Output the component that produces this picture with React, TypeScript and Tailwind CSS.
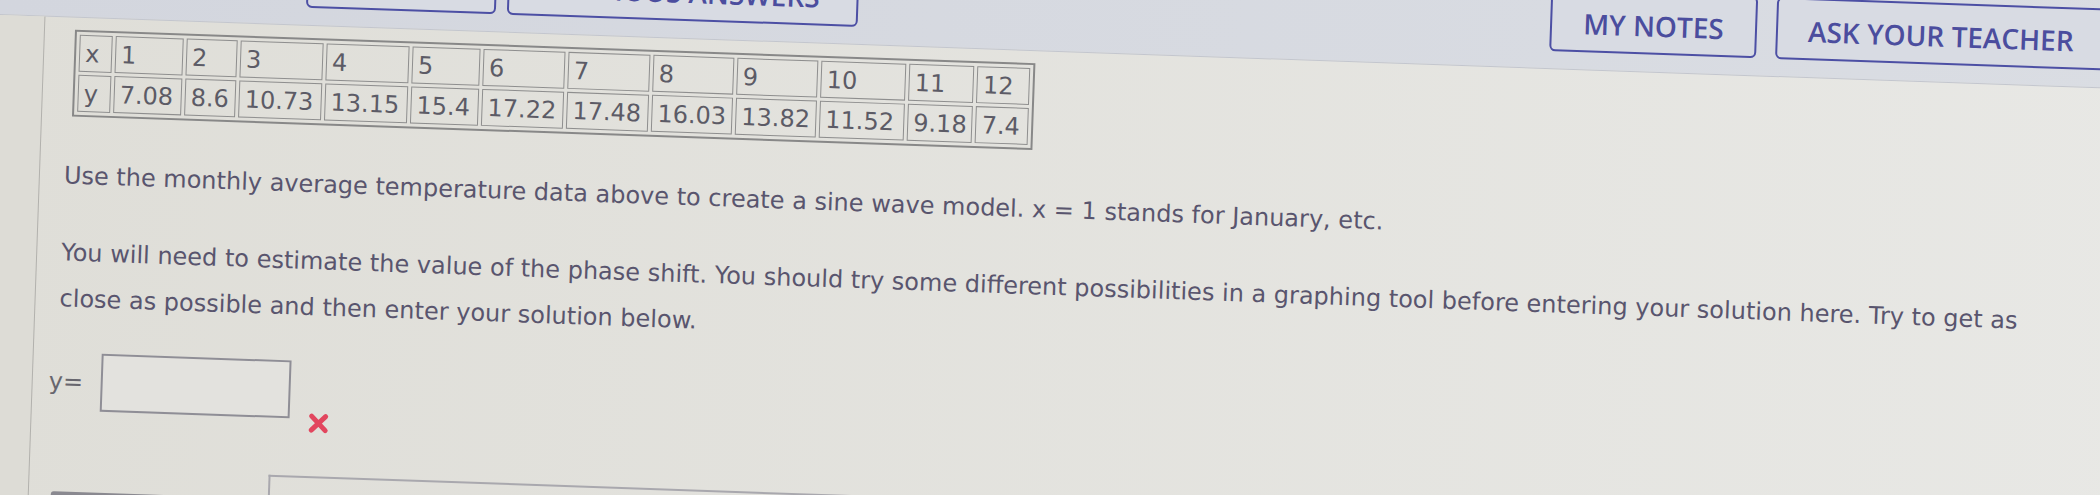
const xs = ['1', '2', '3', '4', '5', '6', '7', '8', '9', '10', '11', '12'];
const ys = ['7.08', '8.6', '10.73', '13.15', '15.4', '17.22', '17.48', '16.03', '13.82', '11.52', '9.18', '7.4'];
const colW = ['w-[68px]', 'w-[51px]', 'w-[83px]', 'w-[83px]', 'w-[68px]', 'w-[82px]', 'w-[82px]', 'w-[81px]', 'w-[81px]', 'w-[85px]', 'w-[65px]', 'w-[53px]'];

const cell = 'h-[37px] border border-[#8e8e8e] px-[5px] text-left align-middle leading-none whitespace-nowrap';

function HeaderButton({ label, className }: { label: string; className: string }) {
  return (
    <div
      className={`h-[62px] pt-[4px] rounded-[6px] border-2 border-[#4c4fa4] bg-[#d8dbe3] flex items-center justify-center text-[28px] font-semibold text-[#4b4d9e] whitespace-nowrap ${className}`}
      style={{ fontFamily: '"Open Sans", sans-serif' }}
    >
      {label}
    </div>
  );
}

function RedCross() {
  return (
    <svg width="22" height="22" viewBox="0 0 22 22" className="-mb-[15px] shrink-0">
      <path d="M4 4 L18 18 M18 4 L4 18" stroke="#e2465e" strokeWidth="5" strokeLinecap="round" />
    </svg>
  );
}

export default function App() {
  return (
    <div className="w-[2100px] h-[495px] overflow-hidden bg-[#e1e0db]" style={{ fontFamily: '"DejaVu Sans", Verdana, sans-serif' }}>
      <div className="-mt-[80px] w-[2170px] h-[620px] origin-[0px_80px] rotate-[2deg] flex flex-col bg-gradient-to-r from-[#dfded8] to-[#e8e8e5]">
        <header className="h-[95px] shrink-0 bg-gradient-to-r from-[#d3d6de] to-[#dadde3] border-b border-[#c3c6ce] flex items-end pb-[17px]">
          <div className="ml-[306px] flex gap-[11px]">
            <HeaderButton label="DETAILS" className="w-[190px]" />
            <HeaderButton label="PREVIOUS ANSWERS" className="w-[351px]" />
          </div>
          <div className="ml-[692px] flex gap-[19px]">
            <HeaderButton label="MY NOTES" className="w-[207px]" />
            <HeaderButton label="ASK YOUR TEACHER" className="w-[380px] justify-start pl-[30px]" />
          </div>
        </header>

        <main className="flex-1 flex">
          <div className="w-[46px] shrink-0 border-r border-[#b2b1ad] bg-[#dddcd6]" />
          <div className="flex-1 flex flex-col pt-[12px] text-[24px] text-[#59556e]">
            <table className="ml-[30px] border-separate border-spacing-[3px] border-2 border-[#888888] text-[#5c5b66] self-start">
              <tbody>
                <tr>
                  <td className={`${cell} w-[33px]`}>x</td>
                  {xs.map((v, i) => (
                    <td key={v} className={`${cell} ${colW[i]}`}>{v}</td>
                  ))}
                </tr>
                <tr>
                  <td className={cell}>y</td>
                  {ys.map((v) => (
                    <td key={v} className={cell}>{v}</td>
                  ))}
                </tr>
              </tbody>
            </table>

            <p className="ml-[24px] mt-[37px] leading-[44px] whitespace-nowrap">
              Use the monthly average temperature data above to create a sine wave model. x = 1 stands for January, etc.
            </p>
            <p className="ml-[24px] mt-[32px] leading-[46px] whitespace-nowrap">
              You will need to estimate the value of the phase shift. You should try some different possibilities in a graphing tool before entering your solution here. Try to get as
              <br />
              close as possible and then enter your solution below.
            </p>

            <div className="ml-[16px] mt-[31px] flex items-end">
              <div className="h-[58px] flex items-center gap-[18px]">
                <span className="text-[#67666e]">y=</span>
                <div className="w-[190px] h-[58px] border-2 border-[#8f8e96] bg-[#e3e2de]" />
              </div>
              <div className="ml-[18px]">
                <RedCross />
              </div>
            </div>

            <div className="mt-[57px] flex items-start">
              <div className="ml-[22px] mt-[24px] w-[177px] h-[14px] rounded-t-[3px] bg-[#8a8990]" />
              <div className="ml-[40px] w-[1000px] h-[60px] border-2 border-[#a9a8ae] border-b-0" />
            </div>
          </div>
        </main>
      </div>
    </div>
  );
}
